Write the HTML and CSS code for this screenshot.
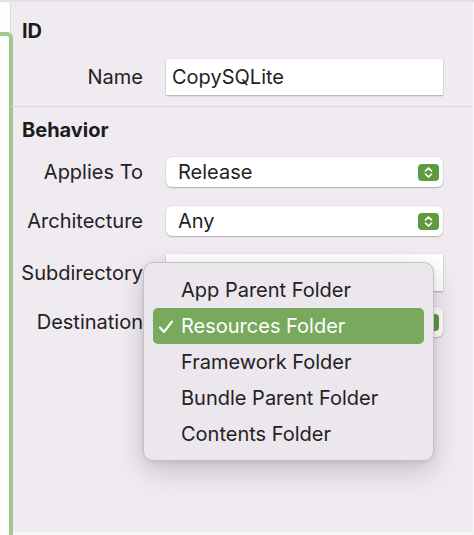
FILE: index.html
```html
<!DOCTYPE html>
<html>
<head>
<meta charset="utf-8">
<link rel="stylesheet" href="styles.css">
</head>
<body>
<div class="window">
  <div class="sidebar"></div>
  <div class="selection-edge"></div>
  <div class="panel">
    <div class="heading heading-id">ID</div>
    <div class="row row-name">
      <div class="label">Name</div>
      <div class="field text-field">CopySQLite</div>
    </div>
    <div class="separator"></div>
    <div class="heading heading-behavior">Behavior</div>
    <div class="row row-applies">
      <div class="label">Applies To</div>
      <div class="field popup">
        <span class="popup-text">Release</span>
        <span class="stepper"><svg width="21" height="17" viewBox="0 0 21 17"><path d="M7.5 6.8 L10.5 4 L13.5 6.8 M7.5 10.2 L10.5 13 L13.5 10.2" fill="none" stroke="#fff" stroke-width="1.7" stroke-linecap="round" stroke-linejoin="round"/></svg></span>
      </div>
    </div>
    <div class="row row-arch">
      <div class="label">Architecture</div>
      <div class="field popup">
        <span class="popup-text">Any</span>
        <span class="stepper"><svg width="21" height="17" viewBox="0 0 21 17"><path d="M7.5 6.8 L10.5 4 L13.5 6.8 M7.5 10.2 L10.5 13 L13.5 10.2" fill="none" stroke="#fff" stroke-width="1.7" stroke-linecap="round" stroke-linejoin="round"/></svg></span>
      </div>
    </div>
    <div class="row row-subdir">
      <div class="label">Subdirectory</div>
      <div class="field text-field"></div>
    </div>
    <div class="row row-dest">
      <div class="label">Destination</div>
      <div class="field popup">
        <span class="popup-text"></span>
        <span class="stepper"></span>
      </div>
    </div>

    <div class="menu">
      <div class="menu-item">App Parent Folder</div>
      <div class="menu-item selected"><svg class="check" width="16" height="16" viewBox="0 0 16 16"><path d="M2 8.5 L6 13 L14 2.5" fill="none" stroke="#fff" stroke-width="2.1" stroke-linecap="round" stroke-linejoin="round"/></svg>Resources Folder</div>
      <div class="menu-item">Framework Folder</div>
      <div class="menu-item">Bundle Parent Folder</div>
      <div class="menu-item">Contents Folder</div>
    </div>
  </div>
</div>
</body>
</html>
```

FILE: styles.css
```css
* { box-sizing: border-box; }
html, body {
  margin: 0;
  padding: 0;
  width: 474px;
  height: 535px;
  overflow: hidden;
}
body {
  font-family: "Inter", "Liberation Sans", sans-serif;
  color: #1f1f1f;
  background: #efebf0;
}
.window {
  position: relative;
  display: flex;
  width: 474px;
  height: 535px;
  border-top: 2px solid #e3dfe4;
  border-bottom: 3px solid #f6f4f7;
}
.sidebar {
  width: 11px;
  flex: none;
  background: #fdfdfd;
  border-right: 1px solid #dcd8dd;
}
.selection-edge {
  position: absolute;
  left: -4px;
  top: 30px;
  width: 17px;
  bottom: -3px;
  border: 4px solid #a4c791;
  border-left: none;
  border-bottom: none;
  border-top-right-radius: 6px;
  background: #fdfdfd;
}
.panel {
  position: relative;
  flex: 1;
  display: flex;
  flex-direction: column;
  border-right: 1px solid #f8f7f9;
}
.heading {
  font-weight: 700;
  font-size: 20px;
  line-height: 20px;
  padding-left: 11px;
  color: #1c1c1c;
}
.heading-id { margin-top: 19px; }
.heading-behavior { margin-top: 13px; }
.separator {
  margin-top: 11px;
  height: 1px;
  background: #d9d5da;
}
.row {
  display: grid;
  grid-template-columns: 132px 277px;
  column-gap: 23px;
  align-items: center;
}
.label {
  text-align: right;
  font-size: 20px;
  line-height: 22px;
  color: #222222;
}
.field {
  height: 30px;
  background: #ffffff;
}
.text-field {
  box-shadow: 0 1px 1.5px rgba(0,0,0,0.25), 0 0 0 0.5px rgba(0,0,0,0.06);
  font-size: 20px;
  padding-left: 6px;
  display: flex;
  align-items: center;
}
.row-name { margin-top: 18px; }
.row-name .field { height: 36px; }
.row-applies { margin-top: 17px; }
.row-arch { margin-top: 19px; }
.row-subdir { margin-top: 18px; }
.row-subdir .field { height: 37px; }
.row-dest { margin-top: 16px; }
.popup {
  border-radius: 6px;
  box-shadow: 0 1px 1.5px rgba(0,0,0,0.22), 0 0 0 0.5px rgba(0,0,0,0.08);
  display: flex;
  align-items: center;
  justify-content: space-between;
  padding-left: 12px;
  padding-right: 4px;
}
.popup-text {
  font-size: 20px;
}
.stepper {
  width: 21px;
  height: 17px;
  border-radius: 4px;
  background: #5e9b3f;
  display: flex;
}
.menu {
  position: absolute;
  left: 132px;
  top: 260px;
  width: 291px;
  padding: 9px 9px 8px 9px;
  background: #ebe7ec;
  border-radius: 10px;
  border: 1px solid #c4c0c5;
  box-shadow: 0 10px 28px rgba(0,0,0,0.18), 0 2px 6px rgba(0,0,0,0.08);
}
.menu-item {
  position: relative;
  height: 36px;
  line-height: 36px;
  padding-left: 28px;
  font-size: 20px;
  color: #222222;
  border-radius: 5px;
}
.menu-item.selected {
  background: #78a95c;
  color: #ffffff;
}
.check {
  position: absolute;
  left: 5px;
  top: 11px;
}
```
